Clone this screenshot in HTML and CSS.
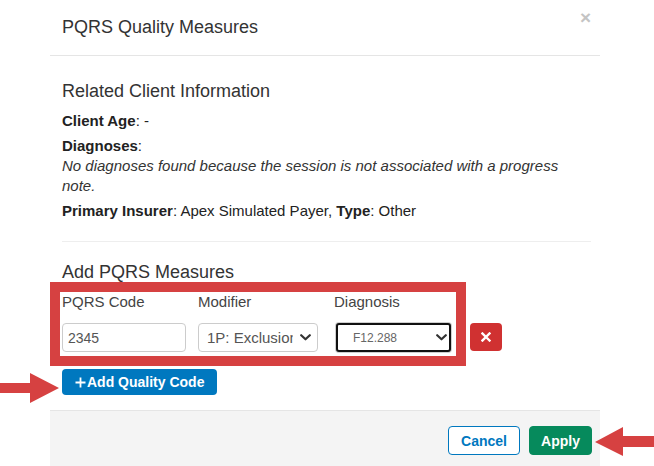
FILE: index.html
```html
<!DOCTYPE html>
<html>
<head>
<meta charset="utf-8">
<link rel="stylesheet" href="styles.css">
</head>
<body>
<div class="modal">
  <div class="modal-header">
    <h4 class="modal-title">PQRS Quality Measures</h4>
    <button class="close" type="button">&times;</button>
  </div>
  <div class="modal-body">
    <h4 class="section-title">Related Client Information</h4>
    <p class="info"><b>Client Age</b>: -</p>
    <p class="info"><b>Diagnoses</b>:<br><i>No diagnoses found because the session is not associated with a progress note.</i></p>
    <p class="info"><b>Primary Insurer</b>: Apex Simulated Payer, <b>Type</b>: Other</p>
    <hr class="divider">
    <h4 class="section-title add-title">Add PQRS Measures</h4>
    <div class="measure-row">
      <div class="highlight">
        <div class="field f-code">
          <label class="field-label">PQRS Code</label>
          <input class="control input" type="text" value="2345">
        </div>
        <div class="field f-mod">
          <label class="field-label">Modifier</label>
          <div class="select-wrap">
            <select class="control select"><option>1P: Exclusion due to medical reasons</option></select>
            <svg class="chev" width="11" height="7" viewBox="0 0 11 7"><path d="M1.2 1.2 L5.5 5.3 L9.8 1.2" fill="none" stroke="#333" stroke-width="2.2" stroke-linecap="round" stroke-linejoin="round"/></svg>
          </div>
        </div>
        <div class="field f-diag">
          <label class="field-label">Diagnosis</label>
          <div class="select-wrap">
            <select class="control select focused"><option>F12.288</option></select>
            <svg class="chev" width="11" height="7" viewBox="0 0 11 7"><path d="M1.2 1.2 L5.5 5.3 L9.8 1.2" fill="none" stroke="#333" stroke-width="2.2" stroke-linecap="round" stroke-linejoin="round"/></svg>
          </div>
        </div>
      </div>
      <button class="remove" type="button" aria-label="Remove">
        <svg width="10" height="10" viewBox="0 0 10 10"><path d="M1.5 1.5 L8.5 8.5 M8.5 1.5 L1.5 8.5" stroke="#fff" stroke-width="2.4" stroke-linecap="square"/></svg>
      </button>
    </div>
    <button class="add-btn" type="button"><svg class="plus" width="11" height="11" viewBox="0 0 11 11"><path d="M5.5 0.5 V10.5 M0.5 5.5 H10.5" stroke="#fff" stroke-width="1.8"/></svg>Add Quality Code</button>
  </div>
  <div class="modal-footer">
    <button class="btn btn-cancel" type="button">Cancel</button>
    <button class="btn btn-apply" type="button">Apply</button>
  </div>
</div>
<svg class="arrow arrow-left" width="60" height="32" viewBox="0 0 60 32"><polygon points="0,10 30,10 30,0 59,15 30,30 30,20 0,20" fill="#d64141"/></svg>
<svg class="arrow arrow-right" width="60" height="32" viewBox="0 0 60 32"><polygon points="0,15 28,0 28,9 60,9 60,20 28,20 28,29" fill="#d64141"/></svg>
</body>
</html>
```
FILE: styles.css
```css
* { box-sizing: border-box; }
html, body { margin: 0; padding: 0; background: #fff; }
body {
  position: relative;
  width: 654px;
  height: 466px;
  overflow: hidden;
  font-family: "Liberation Sans", Arial, sans-serif;
  font-size: 14px;
  line-height: 20px;
  color: #222;
}
.modal {
  margin-left: 50px;
  width: 550px;
  background: #fff;
}
.modal-header {
  display: flex;
  justify-content: space-between;
  align-items: flex-start;
  padding: 15px 9px 15px 12px;
  border-bottom: 1px solid #e5e5e5;
  height: 56px;
}
.modal-title {
  margin: 0;
  font-size: 18px;
  font-weight: normal;
  line-height: 25px;
  color: #333;
}
.close {
  margin: -7px 0 0 0;
  padding: 0;
  border: 0;
  background: none;
  font-family: "Liberation Sans", Arial, sans-serif;
  font-size: 19px;
  font-weight: bold;
  line-height: 20px;
  color: #c4c4c4;
}
.modal-body {
  padding: 15px 9px 15px 12px;
}
.section-title {
  margin: 10px 0 10px;
  font-size: 18px;
  font-weight: normal;
  line-height: 20px;
  color: #333;
}
.info {
  margin: 0 0 5px;
  max-width: 515px;
  font-size: 15px;
  line-height: 20px;
}
.info b { font-weight: bold; color: #222; }
.info i { color: #333; }
.divider {
  margin: 20px 0;
  border: 0;
  border-top: 1px solid #eee;
  height: 0;
}
.add-title { margin: 0; }
.measure-row {
  display: flex;
  align-items: flex-end;
}
.highlight {
  display: flex;
  margin-left: -12px;
  border: 10px solid #d64141;
  padding: 0 4px 4px 2px;
  width: 416px;
}
.field {
  display: flex;
  flex-direction: column;
  align-items: flex-start;
}
.f-code, .f-mod { width: 136px; }
.f-diag { width: 118px; }
.field-label {
  font-size: 15px;
  line-height: 20px;
  color: #444;
  margin-bottom: 11px;
}
.control {
  height: 29px;
  border: 1px solid #ccc;
  border-radius: 4px;
  background: #fff;
  font-family: "Liberation Sans", Arial, sans-serif;
  font-size: 14px;
  color: #555;
  margin: 0;
}
.input {
  width: 124px;
  padding: 0 5px;
}
.select-wrap {
  position: relative;
  display: flex;
}
.select {
  -webkit-appearance: none;
  appearance: none;
  width: 120px;
  padding: 0 24px 0 8px;
  font-size: 15px;
}
.select.focused {
  width: 115px;
  margin-left: 2px;
  border: 2px solid #111;
  border-radius: 3px;
  box-shadow: 0 0 0 1px #cfcfcf;
  font-size: 12px;
  padding-left: 15px;
  color: #666;
  outline: none;
}
.chev {
  position: absolute;
  top: 11px;
  right: 7px;
  pointer-events: none;
}
.f-diag .chev { right: 4px; }
.remove {
  margin: 0 0 15px 4px;
  width: 32px;
  height: 28px;
  border: 0;
  border-radius: 4px;
  background: #d03131;
  display: flex;
  align-items: center;
  justify-content: center;
  padding: 0;
}
.add-btn {
  margin-top: 3px;
  height: 26px;
  padding: 0 13px;
  display: inline-flex;
  align-items: center;
  gap: 1px;
  border: 0;
  border-radius: 4px;
  background: #0078bf;
  color: #fff;
  font-family: "Liberation Sans", Arial, sans-serif;
  font-size: 14px;
  font-weight: bold;
}
.plus { flex: none; }
.modal-footer {
  display: flex;
  justify-content: flex-end;
  gap: 9px;
  padding: 15px 8px 15px;
  background: #f4f4f4;
  border-top: 1px solid #e5e5e5;
  height: 60px;
}
.btn {
  height: 29px;
  border-radius: 4px;
  font-family: "Liberation Sans", Arial, sans-serif;
  font-size: 14px;
  font-weight: bold;
}
.btn-cancel {
  width: 72px;
  background: #fff;
  border: 1px solid #0078bf;
  color: #0078bf;
}
.btn-apply {
  width: 63px;
  background: #068a5c;
  border: 1px solid #068a5c;
  color: #fff;
}
.arrow { position: absolute; }
.arrow-left { left: 0; top: 373px; }
.arrow-right { left: 595px; top: 427px; width: 60px; }
```
